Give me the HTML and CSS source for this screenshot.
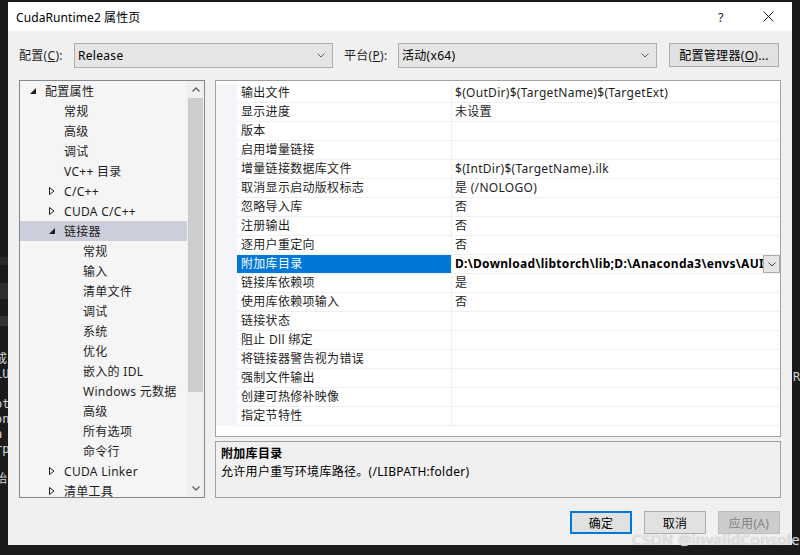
FILE: index.html
```html
<!DOCTYPE html>
<html>
<head>
<meta charset="utf-8">
<link rel="stylesheet" href="styles.css">
</head>
<body>
<div class="screen">
  <div class="bg-left">
    <div class="band b1"></div>
    <div class="band b2"></div>
    <div class="band b3"></div>
    <pre class="bg-code">成
LU

ot
on
a
rp

始</pre>
  </div>
  <div class="bg-right"><span class="bg-r">R</span></div>
  <div class="dialog">
    <div class="titlebar">
      <span class="title">CudaRuntime2 属性页</span>
      <span class="tb-help">?</span>
      <span class="tb-close"><svg width="11" height="11" viewBox="0 0 11 11"><path d="M0.5 0.5 L10.5 10.5 M10.5 0.5 L0.5 10.5" stroke="#1e1e1e" stroke-width="1" fill="none"/></svg></span>
    </div>
    <div class="body">
      <div class="config-row">
        <span class="lbl lbl-conf">配置(<u>C</u>):</span>
        <div class="combo combo-conf"><span>Release</span><svg class="chev" width="8" height="5" viewBox="0 0 8 5"><path d="M0.5 0.5 L4 4 L7.5 0.5" stroke="#606060" fill="none"/></svg></div>
        <span class="lbl lbl-plat">平台(<u>P</u>):</span>
        <div class="combo combo-plat"><span>活动(x64)</span><svg class="chev" width="8" height="5" viewBox="0 0 8 5"><path d="M0.5 0.5 L4 4 L7.5 0.5" stroke="#606060" fill="none"/></svg></div>
        <div class="btn btn-mgr">配置管理器(<u>O</u>)...</div>
      </div>
      <div class="main">
        <div class="tree">
          <div class="tree-list">
            <div class="trow l0"><span class="tog"><svg width="6" height="6" viewBox="0 0 6 6"><path d="M6 0 L6 6 L0 6 Z" fill="#1e1e1e"/></svg></span><span>配置属性</span></div>
            <div class="trow l1"><span class="tog"></span><span>常规</span></div>
            <div class="trow l1"><span class="tog"></span><span>高级</span></div>
            <div class="trow l1"><span class="tog"></span><span>调试</span></div>
            <div class="trow l1"><span class="tog"></span><span>VC++ 目录</span></div>
            <div class="trow l1"><span class="tog"><svg width="6" height="8" viewBox="0 0 6 8"><path d="M0.5 0.5 L5 4 L0.5 7.5 Z" fill="none" stroke="#1e1e1e"/></svg></span><span>C/C++</span></div>
            <div class="trow l1"><span class="tog"><svg width="6" height="8" viewBox="0 0 6 8"><path d="M0.5 0.5 L5 4 L0.5 7.5 Z" fill="none" stroke="#1e1e1e"/></svg></span><span>CUDA C/C++</span></div>
            <div class="trow l1 sel"><span class="tog"><svg width="6" height="6" viewBox="0 0 6 6"><path d="M6 0 L6 6 L0 6 Z" fill="#1e1e1e"/></svg></span><span>链接器</span></div>
            <div class="trow l2"><span class="tog"></span><span>常规</span></div>
            <div class="trow l2"><span class="tog"></span><span>输入</span></div>
            <div class="trow l2"><span class="tog"></span><span>清单文件</span></div>
            <div class="trow l2"><span class="tog"></span><span>调试</span></div>
            <div class="trow l2"><span class="tog"></span><span>系统</span></div>
            <div class="trow l2"><span class="tog"></span><span>优化</span></div>
            <div class="trow l2"><span class="tog"></span><span>嵌入的 IDL</span></div>
            <div class="trow l2"><span class="tog"></span><span>Windows 元数据</span></div>
            <div class="trow l2"><span class="tog"></span><span>高级</span></div>
            <div class="trow l2"><span class="tog"></span><span>所有选项</span></div>
            <div class="trow l2"><span class="tog"></span><span>命令行</span></div>
            <div class="trow l1"><span class="tog"><svg width="6" height="8" viewBox="0 0 6 8"><path d="M0.5 0.5 L5 4 L0.5 7.5 Z" fill="none" stroke="#1e1e1e"/></svg></span><span>CUDA Linker</span></div>
            <div class="trow l1"><span class="tog"><svg width="6" height="8" viewBox="0 0 6 8"><path d="M0.5 0.5 L5 4 L0.5 7.5 Z" fill="none" stroke="#1e1e1e"/></svg></span><span>清单工具</span></div>
          </div>
          <div class="scrollbar">
            <div class="sb-arrow"><svg width="8" height="5" viewBox="0 0 8 5"><path d="M0.5 4.5 L4 1 L7.5 4.5" stroke="#606060" stroke-width="1.3" fill="none"/></svg></div>
            <div class="sb-track"><div class="sb-thumb"></div></div>
            <div class="sb-arrow"><svg width="8" height="5" viewBox="0 0 8 5"><path d="M0.5 0.5 L4 4 L7.5 0.5" stroke="#606060" stroke-width="1.3" fill="none"/></svg></div>
          </div>
        </div>
        <div class="right">
          <div class="grid">
            <div class="grow"><span class="gut"></span><span class="gname">输出文件</span><span class="gval">$(OutDir)$(TargetName)$(TargetExt)</span></div>
            <div class="grow"><span class="gut"></span><span class="gname">显示进度</span><span class="gval">未设置</span></div>
            <div class="grow"><span class="gut"></span><span class="gname">版本</span><span class="gval"></span></div>
            <div class="grow"><span class="gut"></span><span class="gname">启用增量链接</span><span class="gval"></span></div>
            <div class="grow"><span class="gut"></span><span class="gname">增量链接数据库文件</span><span class="gval">$(IntDir)$(TargetName).ilk</span></div>
            <div class="grow"><span class="gut"></span><span class="gname">取消显示启动版权标志</span><span class="gval">是 (/NOLOGO)</span></div>
            <div class="grow"><span class="gut"></span><span class="gname">忽略导入库</span><span class="gval">否</span></div>
            <div class="grow"><span class="gut"></span><span class="gname">注册输出</span><span class="gval">否</span></div>
            <div class="grow"><span class="gut"></span><span class="gname">逐用户重定向</span><span class="gval">否</span></div>
            <div class="grow gsel"><span class="gut"></span><span class="gname">附加库目录</span><span class="gval"><span class="gtext">D:\Download\libtorch\lib;D:\Anaconda3\envs\AUI\Lib</span><span class="gdrop"><svg width="8" height="5" viewBox="0 0 8 5"><path d="M0.5 0.5 L4 4 L7.5 0.5" stroke="#404040" fill="none"/></svg></span></span></div>
            <div class="grow"><span class="gut"></span><span class="gname">链接库依赖项</span><span class="gval">是</span></div>
            <div class="grow"><span class="gut"></span><span class="gname">使用库依赖项输入</span><span class="gval">否</span></div>
            <div class="grow"><span class="gut"></span><span class="gname">链接状态</span><span class="gval"></span></div>
            <div class="grow"><span class="gut"></span><span class="gname">阻止 Dll 绑定</span><span class="gval"></span></div>
            <div class="grow"><span class="gut"></span><span class="gname">将链接器警告视为错误</span><span class="gval"></span></div>
            <div class="grow"><span class="gut"></span><span class="gname">强制文件输出</span><span class="gval"></span></div>
            <div class="grow"><span class="gut"></span><span class="gname">创建可热修补映像</span><span class="gval"></span></div>
            <div class="grow"><span class="gut"></span><span class="gname">指定节特性</span><span class="gval"></span></div>
          </div>
          <div class="desc">
            <div class="desc-title">附加库目录</div>
            <div class="desc-text">允许用户重写环境库路径。(/LIBPATH:folder)</div>
          </div>
        </div>
      </div>
      <div class="buttons">
        <div class="btn dbtn default">确定</div>
        <div class="btn dbtn">取消</div>
        <div class="btn dbtn disabled">应用(A)</div>
      </div>
    </div>
  </div>
  <div class="watermark">CSDN @invalidConsole</div>
</div>
</body>
</html>
```

FILE: styles.css
```css
* { box-sizing: border-box; margin: 0; padding: 0; }
body {
  margin: 0;
  background: #1b1b1b;
  font-family: "Noto Sans", "Noto Sans CJK SC", sans-serif;
  font-size: 12px;
  letter-spacing: 0.3px;
  color: #1e1e1e;
}
.screen {
  position: relative;
  width: 800px;
  height: 555px;
  overflow: hidden;
  background: #1b1b1b;
  padding: 2px 8px 0 8px;
}
.bg-left {
  position: absolute;
  left: 0; top: 0;
  width: 8px; height: 555px;
  overflow: hidden;
}
.band { position: absolute; left: 0; width: 8px; }
.b1 { top: 257px; height: 8px; background: #2a2a2a; }
.b2 { top: 283px; height: 16px; background: #2e2e2e; }
.b3 { top: 316px; height: 10px; background: #333; }
.bg-code {
  position: absolute;
  left: -5px; top: 352px;
  font-family: "DejaVu Sans Mono", "Noto Sans CJK SC", monospace;
  font-size: 12px;
  line-height: 15px;
  letter-spacing: 0;
  color: #d4d4d4;
}
.bg-right {
  position: absolute;
  right: 0; top: 0;
  width: 8px; height: 555px;
  overflow: hidden;
}
.bg-r {
  position: absolute;
  left: 1px; top: 370px;
  font-family: "DejaVu Sans Mono", monospace;
  font-size: 12px;
  color: #d4d4d4;
}
.dialog {
  width: 784px;
  height: 543px;
  background: #f0f0f0;
  display: flex;
  flex-direction: column;
}
.titlebar {
  height: 29px;
  background: #fff;
  display: flex;
  align-items: center;
  padding-left: 8px;
  flex-shrink: 0;
}
.title { flex: 1; font-size: 12px; color: #000; letter-spacing: 0.1px; }
.tb-help { width: 12px; margin-right: 33px; font-size: 13px; color: #1e1e1e; }
.tb-close { width: 11px; margin-right: 18px; display: flex; }
.body {
  flex: 1;
  display: flex;
  flex-direction: column;
  padding: 0 11px;
}
.config-row {
  display: flex;
  align-items: center;
  height: 26px;
  margin-top: 11px;
}
.lbl { color: #1e1e1e; white-space: nowrap; }
.lbl-conf { width: 55px; }
.lbl-plat { width: 54px; margin-left: 11px; }
.combo {
  width: 259px;
  height: 25px;
  border: 1px solid #adadad;
  background: #e5e5e5;
  display: flex;
  align-items: center;
  justify-content: space-between;
  padding: 0 7px 0 3px;
  color: #000;
}
.btn {
  display: flex;
  align-items: center;
  justify-content: center;
  border: 1px solid #adadad;
  background: #e1e1e1;
  color: #000;
  white-space: nowrap;
}
.btn-mgr { margin-left: 12px; width: 110px; height: 24px; }
.main {
  display: flex;
  gap: 10px;
  margin-top: 12px;
  height: 418px;
}
.tree {
  width: 186px;
  height: 418px;
  border: 1px solid #828790;
  background: #f5f5f5;
  display: flex;
  overflow: hidden;
}
.tree-list { width: 167px; overflow: hidden; }
.trow {
  height: 20px;
  display: flex;
  align-items: center;
  white-space: nowrap;
  color: #1e1e1e;
}
.trow.sel { background: #cccedb; }
.l0 { padding-left: 10px; }
.l1 { padding-left: 29px; }
.l2 { padding-left: 48px; }
.tog { width: 15px; display: flex; align-items: center; }
.scrollbar {
  width: 17px;
  display: flex;
  flex-direction: column;
  background: #f0f0f0;
}
.sb-arrow { height: 17px; display: flex; align-items: center; justify-content: center; }
.sb-track { flex: 1; }
.sb-thumb { margin: 0 1px; height: 294px; background: #cdcdcd; }
.right {
  width: 566px;
  display: flex;
  flex-direction: column;
  gap: 4px;
}
.grid {
  height: 357px;
  border: 1px solid #a0a0a0;
  background: #fff;
  padding-top: 3px;
  overflow: hidden;
}
.grow {
  display: flex;
  height: 19px;
}
.gut { width: 21px; background: #f3f5f9; flex-shrink: 0; }
.gname {
  width: 214px;
  flex-shrink: 0;
  padding-left: 4px;
  border-bottom: 1px solid #f0f0f0;
  line-height: 18px;
  white-space: nowrap;
  color: #1e1e1e;
}
.gval {
  flex: 1;
  min-width: 0;
  border-left: 1px solid #f0f0f0;
  border-bottom: 1px solid #f0f0f0;
  padding-left: 3px;
  line-height: 18px;
  white-space: nowrap;
  overflow: hidden;
  display: flex;
  color: #1e1e1e;
}
.gsel .gname { background: #0078d7; color: #fff; }
.gsel .gval { font-weight: bold; color: #000; }
.gtext { flex: 1; overflow: hidden; min-width: 0; }
.gdrop {
  width: 17px;
  height: 18px;
  flex-shrink: 0;
  border: 1px solid #adadad;
  background: #e5e5e5;
  display: flex;
  align-items: center;
  justify-content: center;
}
.desc {
  flex: 1;
  border: 1px solid #a0a0a0;
  padding: 3px 5px;
  line-height: 18px;
  color: #000;
}
.desc-title { font-weight: bold; }
.buttons {
  display: flex;
  justify-content: flex-end;
  gap: 12px;
  margin-top: 13px;
  padding-right: 1px;
}
.dbtn { width: 62px; height: 23px; }
.dbtn.default { border: 2px solid #0078d7; }
.dbtn.disabled { background: #cccccc; border-color: #bfbfbf; color: #838383; }
.watermark {
  position: absolute;
  left: 632px;
  top: 529px;
  font-family: "Noto Sans", sans-serif;
  font-size: 15px;
  letter-spacing: 0.4px;
  color: rgba(255, 255, 255, 0.75);
  text-shadow: 0 0 1px rgba(120, 120, 120, 0.8);
  white-space: nowrap;
}
```
